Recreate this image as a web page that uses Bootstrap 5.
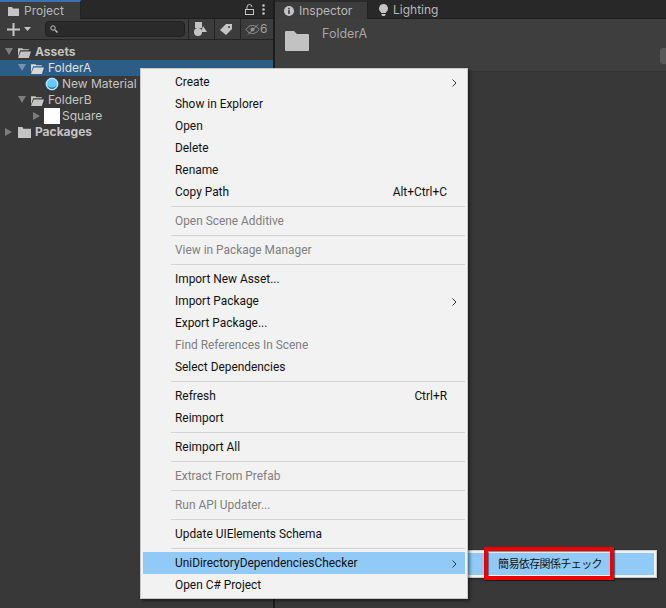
<!DOCTYPE html>
<html lang="en">
<head>
<meta charset="UTF-8">
<meta name="viewport" content="width=device-width, initial-scale=1">
<title>Unity Project Context Menu</title>
<link href="https://cdn.jsdelivr.net/npm/bootstrap@5.3.0/dist/css/bootstrap.min.css" rel="stylesheet">
<style>
html,body{height:100%;}
body{background:#383838;overflow:hidden;font-family:Inter,"Liberation Sans",sans-serif;font-size:12px;color:#c4c4c4;}
.editor-root{height:608px;position:relative;}
.pane-left{width:273px;}
.pane-split{width:2px;background:#1c1c1c;}
.tab-strip{height:19px;background:#282828;border-bottom:1px solid #1e1e1e;}
.tab-item{height:19px;padding:0 0 0 8px;gap:5px;color:#b8b8b8;}
.tab-on{background:#3c3c3c;border-top:2px solid #3a72b0;width:81px;border-right:1px solid #222;}
.tab-on-r{background:#3c3c3c;width:93px;padding-left:9px;border-right:1px solid #222;border-top:2px solid #2b2b2b;}
.tool-strip{height:21px;background:#3c3c3c;border-bottom:1px solid #232323;}
.plus-btn{width:45px;padding-left:7px;gap:4px;}
.search-box{width:140px;height:16px;background:#2a2a2a;border:1px solid #212121;border-radius:4px;padding-left:4px;}
.tool-btn{height:20px;border-left:1px solid #232323;padding:0 4px;}
.tool-first{margin-left:3px;}
.tool-w26{width:26px;}
.tool-w33{width:33px;}
.tree-wrap{padding-top:4px;}
.tree-row{height:16px;white-space:nowrap;color:#c4c4c4;}
.tree-sel{background:#2c5d87;color:#e0e0e0;}
.tree-bold{font-weight:700;}
.lvl0{padding-left:5px;}
.lvl1{padding-left:18px;}
.lvl2{padding-left:45px;}
.lvl2b{padding-left:33px;}
.tw{width:13px;flex:none;}
.tw-sm{width:11px;}
.ico{margin-right:4px;flex:none;}
.ico-mat{margin-right:3px;}
.ico-sq{margin-right:2px;}
.tab-lighting{padding-left:11px;}
.eye-count{color:#a0a0a0;}
.insp-head{height:53px;background:#3e3e3e;border-bottom:1px solid #353535;padding:7px 0 0 10px;position:relative;}
.insp-folder{margin-top:4px;}
.insp-title{font-size:12.5px;color:#a6a6a6;margin-left:13px;margin-top:-1px;}
.side-btn{position:absolute;right:-3px;top:29px;width:9px;height:16px;background:#585858;border-radius:3px;}
.ctx-menu.dropdown-menu{position:absolute;left:140px;top:68px;width:328px;background:#f2f2f2;border:1px solid #c8c8c8;border-radius:0;padding:2px 2px;margin:0;box-shadow:2px 2px 3px rgba(0,0,0,.45);font-family:Roboto,"Liberation Sans",sans-serif;font-size:11.9px;min-width:0;display:block;}
.ctx-menu .dropdown-item{height:22px;padding:1px 3px 0 32px;display:flex;align-items:center;justify-content:space-between;color:#111;font-size:11.9px;background:transparent;}
.ctx-menu .dropdown-item.disabled{color:#7f7f7f;}
.ctx-menu .dropdown-item.row-hot{background:#91c9f7;color:#111;}
.ctx-menu .dropdown-divider{margin:3px 0 3px 28px;border-top:1px solid #d4d4d4;opacity:1;height:1px;}
.short-key{margin-right:15px;margin-left:auto;}
.more-arrow{margin-right:5px;flex:none;}
.sub-menu{position:absolute;left:462px;top:550px;width:195px;height:28px;background:#f2f2f2;border:1px solid #c8c8c8;padding:2px;box-shadow:1px 1px 2px rgba(0,0,0,.35);}
.sub-hot{height:22px;background:#91c9f7;color:#111;font-family:"Noto Sans CJK JP","Noto Sans",sans-serif;font-size:11px;letter-spacing:-.6px;padding-left:33px;line-height:21px;}
.red-box{position:absolute;left:484px;top:547px;width:130px;height:33px;border:4px solid #ee0000;box-shadow:1px 1px 1px rgba(0,0,0,.5),inset 1px 1px 1px rgba(0,0,0,.45);}
</style>
</head>
<body>
<div class="editor-root d-flex">
  <div class="pane-left flex-shrink-0">
    <div class="tab-strip d-flex">
      <div class="tab-item tab-on d-flex align-items-center">
        <svg width="11" height="10" viewBox="0 0 11 10"><path d="M0 1h4l1 1.500h6V10H0z" fill="#c4c4c4"/></svg>
        <span>Project</span>
      </div>
      <div class="ms-auto d-flex align-items-center gap-2 pe-2">
        <svg width="9" height="11" viewBox="0 0 9 11"><path d="M2 5V3a2.500 2.500 0 0 1 5 0" fill="none" stroke="#c4c4c4"/><rect x=".5" y="5.500" width="8" height="5" fill="none" stroke="#c4c4c4"/></svg>
        <svg width="3" height="11" viewBox="0 0 3 11"><circle cx="1.500" cy="1.500" r="1.300" fill="#c4c4c4"/><circle cx="1.500" cy="5.500" r="1.300" fill="#c4c4c4"/><circle cx="1.500" cy="9.500" r="1.300" fill="#c4c4c4"/></svg>
      </div>
    </div>
    <div class="tool-strip d-flex align-items-center">
      <div class="plus-btn d-flex align-items-center">
        <svg width="13" height="13" viewBox="0 0 13 13"><path d="M5.500 0h2v5.500H13v2H7.500V13h-2V7.500H0v-2h5.500z" fill="#c4c4c4"/></svg>
        <svg width="7" height="4" viewBox="0 0 7 4"><path d="M0 0h7L3.500 4z" fill="#c4c4c4"/></svg>
      </div>
      <div class="search-box d-flex align-items-center">
        <svg width="8" height="8" viewBox="0 0 8 8"><circle cx="3" cy="3" r="2.200" fill="none" stroke="#c4c4c4"/><path d="M5 5l2.500 2.500" stroke="#c4c4c4" stroke-width="1.400"/></svg>
      </div>
      <div class="tool-btn tool-first tool-w26 d-flex align-items-center">
        <svg width="15" height="14" viewBox="0 0 15 14"><rect x="2" y="0" width="7" height="6" fill="#c4c4c4"/><circle cx="5" cy="10" r="4" fill="#c4c4c4"/><path d="M10 4l4 6H8z" fill="#c4c4c4"/></svg>
      </div>
      <div class="tool-btn tool-w26 d-flex align-items-center">
        <svg width="14" height="13" viewBox="0 0 14 13"><path d="M1 7l6-6h6v5l-6 6z" fill="#c4c4c4"/><circle cx="10" cy="4" r="1" fill="#3c3c3c"/></svg>
      </div>
      <div class="tool-btn tool-w33 d-flex align-items-center">
        <svg width="15" height="11" viewBox="0 0 15 11"><path d="M1 5.500C3 2.500 5 1.500 7.500 1.500S12 2.500 14 5.500C12 8.500 10 9.500 7.500 9.500S3 8.500 1 5.500z" fill="none" stroke="#8f8f8f"/><path d="M3 10.500L13 .5" stroke="#8f8f8f"/><circle cx="7.500" cy="5.500" r="2" fill="#8f8f8f"/></svg>
        <span class="eye-count">6</span>
      </div>
    </div>
    <div class="tree-wrap">
      <div class="tree-row lvl0 tree-bold d-flex align-items-center">
        <svg class="tw" width="13" height="8" viewBox="0 0 13 8"><path d="M0 0h8L4 7z" fill="#7d7d7d"/></svg>
        <svg class="ico" width="13" height="11" viewBox="0 0 12 10"><path d="M0 1h4l1 1h5v1H2L0 9zM2.500 4H12l-2 6H0z" fill="#c4c4c4"/></svg>
        <span>Assets</span>
      </div>
      <div class="tree-row tree-sel lvl1 d-flex align-items-center">
        <svg class="tw" width="13" height="8" viewBox="0 0 13 8"><path d="M0 0h8L4 7z" fill="#7a93a8"/></svg>
        <svg class="ico" width="13" height="11" viewBox="0 0 12 10"><path d="M0 1h4l1 1h5v1H2L0 9zM2.500 4H12l-2 6H0z" fill="#d8d8d8"/></svg>
        <span>FolderA</span>
      </div>
      <div class="tree-row lvl2 d-flex align-items-center">
        <svg class="ico ico-mat" width="14" height="14" viewBox="0 0 14 14"><circle cx="7" cy="7" r="6.500" fill="#5fc3f5"/><circle cx="7" cy="7" r="5.500" fill="#66c8f8" stroke="#d8eefa"/><path d="M2.500 8.500a4.800 4.800 0 0 0 9 0a5 4 0 0 1-9 0z" fill="#1d4a66"/></svg>
        <span>New Material</span>
      </div>
      <div class="tree-row lvl1 d-flex align-items-center">
        <svg class="tw" width="13" height="8" viewBox="0 0 13 8"><path d="M0 0h8L4 7z" fill="#7d7d7d"/></svg>
        <svg class="ico" width="13" height="11" viewBox="0 0 12 10"><path d="M0 1h4l1 1h5v1H2L0 9zM2.500 4H12l-2 6H0z" fill="#c4c4c4"/></svg>
        <span>FolderB</span>
      </div>
      <div class="tree-row lvl2b d-flex align-items-center">
        <svg class="tw tw-sm" width="11" height="8" viewBox="0 0 11 8"><path d="M0 0l7 4-7 4z" fill="#7d7d7d"/></svg>
        <svg class="ico ico-sq" width="16" height="16" viewBox="0 0 16 16"><rect width="16" height="16" fill="#fff"/></svg>
        <span>Square</span>
      </div>
      <div class="tree-row lvl0 tree-bold d-flex align-items-center">
        <svg class="tw" width="13" height="8" viewBox="0 0 13 8"><path d="M0 0l7 4-7 4z" fill="#7d7d7d"/></svg>
        <svg class="ico" width="13" height="11" viewBox="0 0 12 10"><path d="M0 0h4l1 1.500h7V10H0z" fill="#c4c4c4"/></svg>
        <span>Packages</span>
      </div>
    </div>
  </div>
  <div class="pane-split flex-shrink-0"></div>
  <div class="flex-grow-1 overflow-hidden">
    <div class="tab-strip d-flex">
      <div class="tab-item tab-on-r d-flex align-items-center">
        <svg width="10" height="10" viewBox="0 0 10 10"><circle cx="5" cy="5" r="5" fill="#c4c4c4"/><rect x="4.200" y="4" width="1.600" height="4" fill="#3c3c3c"/><rect x="4.200" y="1.800" width="1.600" height="1.500" fill="#3c3c3c"/></svg>
        <span>Inspector</span>
      </div>
      <div class="tab-item tab-lighting d-flex align-items-center">
        <svg width="9" height="12" viewBox="0 0 9 12"><path d="M4.500 0a4.500 4.500 0 0 1 2.500 8.200V9H2v-.8A4.500 4.500 0 0 1 4.500 0zM2.500 10h4v1l-1 1h-2l-1-1z" fill="#c4c4c4"/></svg>
        <span>Lighting</span>
      </div>
    </div>
    <div class="insp-head d-flex">
      <svg class="insp-folder" width="24" height="21" viewBox="0 0 24 21"><path d="M1 1h8l3 3h11a1 1 0 0 1 1 1v15a1 1 0 0 1-1 1H1a1 1 0 0 1-1-1V2a1 1 0 0 1 1-1z" fill="#c2c2c2"/></svg>
      <div class="insp-title">FolderA</div>
      <div class="side-btn"></div>
    </div>
  </div>

  <div class="ctx-menu dropdown-menu show">
    <a class="dropdown-item">Create<svg class="more-arrow" width="5" height="8" viewBox="0 0 5 8"><path d="M.5.5L4 4 .5 7.500" fill="none" stroke="#333"/></svg></a>
    <a class="dropdown-item">Show in Explorer</a>
    <a class="dropdown-item">Open</a>
    <a class="dropdown-item">Delete</a>
    <a class="dropdown-item">Rename</a>
    <a class="dropdown-item">Copy Path<span class="short-key">Alt+Ctrl+C</span></a>
    <div class="dropdown-divider"></div>
    <a class="dropdown-item disabled">Open Scene Additive</a>
    <div class="dropdown-divider"></div>
    <a class="dropdown-item disabled">View in Package Manager</a>
    <div class="dropdown-divider"></div>
    <a class="dropdown-item">Import New Asset...</a>
    <a class="dropdown-item">Import Package<svg class="more-arrow" width="5" height="8" viewBox="0 0 5 8"><path d="M.5.5L4 4 .5 7.500" fill="none" stroke="#333"/></svg></a>
    <a class="dropdown-item">Export Package...</a>
    <a class="dropdown-item disabled">Find References In Scene</a>
    <a class="dropdown-item">Select Dependencies</a>
    <div class="dropdown-divider"></div>
    <a class="dropdown-item">Refresh<span class="short-key">Ctrl+R</span></a>
    <a class="dropdown-item">Reimport</a>
    <div class="dropdown-divider"></div>
    <a class="dropdown-item">Reimport All</a>
    <div class="dropdown-divider"></div>
    <a class="dropdown-item disabled">Extract From Prefab</a>
    <div class="dropdown-divider"></div>
    <a class="dropdown-item disabled">Run API Updater...</a>
    <div class="dropdown-divider"></div>
    <a class="dropdown-item">Update UIElements Schema</a>
    <div class="dropdown-divider"></div>
    <a class="dropdown-item row-hot">UniDirectoryDependenciesChecker<svg class="more-arrow" width="5" height="8" viewBox="0 0 5 8"><path d="M.5.5L4 4 .5 7.500" fill="none" stroke="#333"/></svg></a>
    <a class="dropdown-item">Open C# Project</a>
  </div>
  <div class="sub-menu"><div class="sub-hot">簡易依存関係チェック</div></div>
  <div class="red-box"></div>
</div>
<script src="https://cdn.jsdelivr.net/npm/bootstrap@5.3.0/dist/js/bootstrap.bundle.min.js"></script>
</body>
</html>
